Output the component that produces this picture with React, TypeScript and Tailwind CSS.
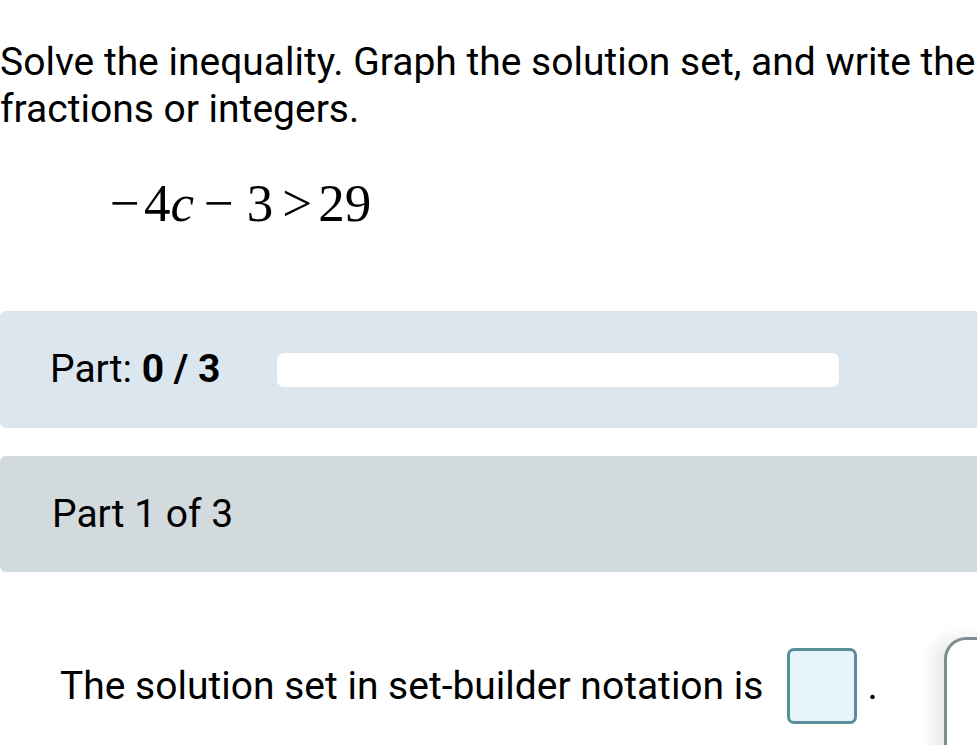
import React from "react";

export default function App() {
  return (
    <div className="relative w-[977px] h-[745px] overflow-hidden bg-white text-black" style={{ fontFamily: "Roboto, 'Noto Sans', sans-serif" }}>
      <div className="pt-[39px] whitespace-nowrap text-[39px] leading-[47px]">
        <div>Solve the inequality. Graph the solution set, and write the</div>
        <div>fractions or integers.</div>
      </div>
      <div className="mt-[40px] ml-[110px] flex items-center text-[53px] leading-[60px] whitespace-nowrap" style={{ fontFamily: "'Liberation Serif', 'DejaVu Serif', serif" }}>
        <span>−</span>
        <span className="ml-[4px]">4</span>
        <span className="italic">c</span>
        <span className="ml-[10px]">−</span>
        <span className="ml-[13px]">3</span>
        <span className="ml-[9px]">&gt;</span>
        <span className="ml-[6px]">29</span>
      </div>
      <div className="mt-[78px] h-[117px] w-[990px] rounded-l-[6px] bg-[#dbe6ef] flex items-center pl-[50px]">
        <div className="w-[227px] text-[39px] whitespace-nowrap">
          Part: <span className="font-bold">0 / 3</span>
        </div>
        <div className="h-[34px] w-[562px] rounded-[7px] bg-white" />
      </div>
      <div className="mt-[28px] h-[116px] w-[990px] rounded-l-[6px] bg-[#d2dadd] flex items-center pl-[52px] text-[39px]">
        Part 1 of 3
      </div>
      <div className="mt-[76px] flex items-center pl-[60px] text-[39px] whitespace-nowrap">
        <span>The solution set in set-builder notation is</span>
        <div className="ml-[24px] h-[76px] w-[70px] rounded-[7px] border-[3px] border-[#5a8e9b] bg-[#e7f4f9]" />
        <span className="ml-[10px]">.</span>
      </div>
      <div className="absolute left-[944px] top-[637px] h-[140px] w-[80px] rounded-tl-[22px] border-l-[3px] border-t-[3px] border-[#7e8d90] bg-white shadow-[-12px_0_14px_rgba(0,0,0,0.08)]" />
    </div>
  );
}
